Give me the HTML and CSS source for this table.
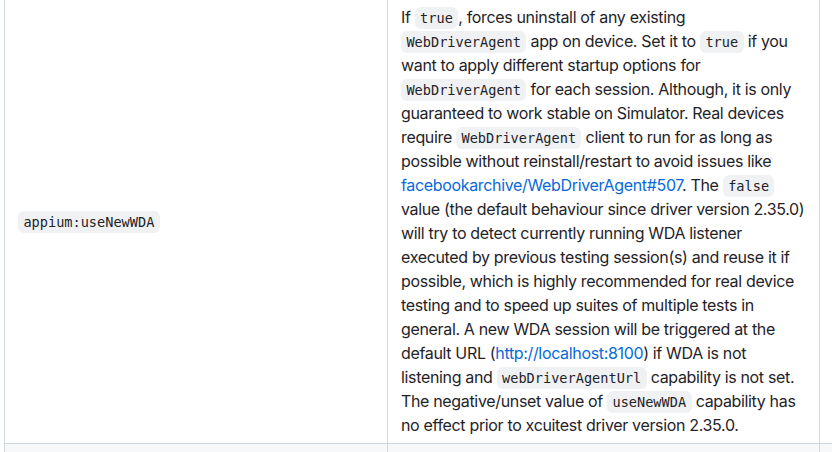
FILE: index.html
```html
<!DOCTYPE html>
<html>
<head>
<meta charset="utf-8">
<link rel="stylesheet" href="styles.css">
</head>
<body>
<div class="wrap">
<table class="caps">
<tbody>
<tr>
<td class="name"><code>appium:useNewWDA</code></td>
<td class="desc">If <code>true</code>, forces uninstall of any existing <code>WebDriverAgent</code> app on device. Set it to <code>true</code> if you want to apply different startup options for <code>WebDriverAgent</code> for each session. Although, it is only guaranteed to work stable on Simulator. Real devices require <code>WebDriverAgent</code> client to run for as long as possible without reinstall/restart to avoid issues like <a href="#">facebookarchive/WebDriverAgent#507</a>. The <code>false</code> value (the default behaviour since driver version 2.35.0) will try to detect currently running WDA listener executed by previous testing session(s) and reuse it if possible, which is highly recommended for real device testing and to speed up suites of multiple tests in general. A new WDA session will be triggered at the default URL (<a href="#">http://localhost:8100</a>) if WDA is not listening and <code>webDriverAgentUrl</code> capability is not set. The negative/unset value of <code>useNewWDA</code> capability has no effect prior to xcuitest driver version 2.35.0.</td>
<td class="extra"></td>
</tr>
<tr class="alt">
<td class="name">&nbsp;</td>
<td class="desc">&nbsp;</td>
<td class="extra"></td>
</tr>
</tbody>
</table>
</div>
</body>
</html>
```
FILE: styles.css
```css
html, body {
  margin: 0;
  padding: 0;
  background: #ffffff;
  overflow: hidden;
}
body {
  font-family: Inter, "Noto Sans", "Liberation Sans", sans-serif;
  font-size: 16px;
  line-height: 24px;
  letter-spacing: -0.34px;
  color: #1f2328;
}
.wrap {
  width: 832px;
  overflow: hidden;
  padding-left: 4px;
  margin-top: -2px;
  box-sizing: border-box;
}
.caps {
  border-collapse: collapse;
  border-spacing: 0;
  table-layout: fixed;
  width: 1000px;
}
.caps td {
  border: 1px solid #d1d9e0;
  padding: 6px 13px;
  vertical-align: middle;
}
.caps .name { width: 356px; }
.caps .desc { width: 405px; }
.caps .extra { width: 200px; }
.caps tr.alt td { background: #f6f8fa; }
code {
  font-family: "DejaVu Sans Mono", "Liberation Mono", monospace;
  font-size: 13.6px;
  line-height: 1;
  letter-spacing: 0;
  background: rgba(175, 184, 193, 0.2);
  border-radius: 6px;
  padding: 2.7px 5.4px;
}
a {
  color: #0969da;
  text-decoration: none;
}
```
